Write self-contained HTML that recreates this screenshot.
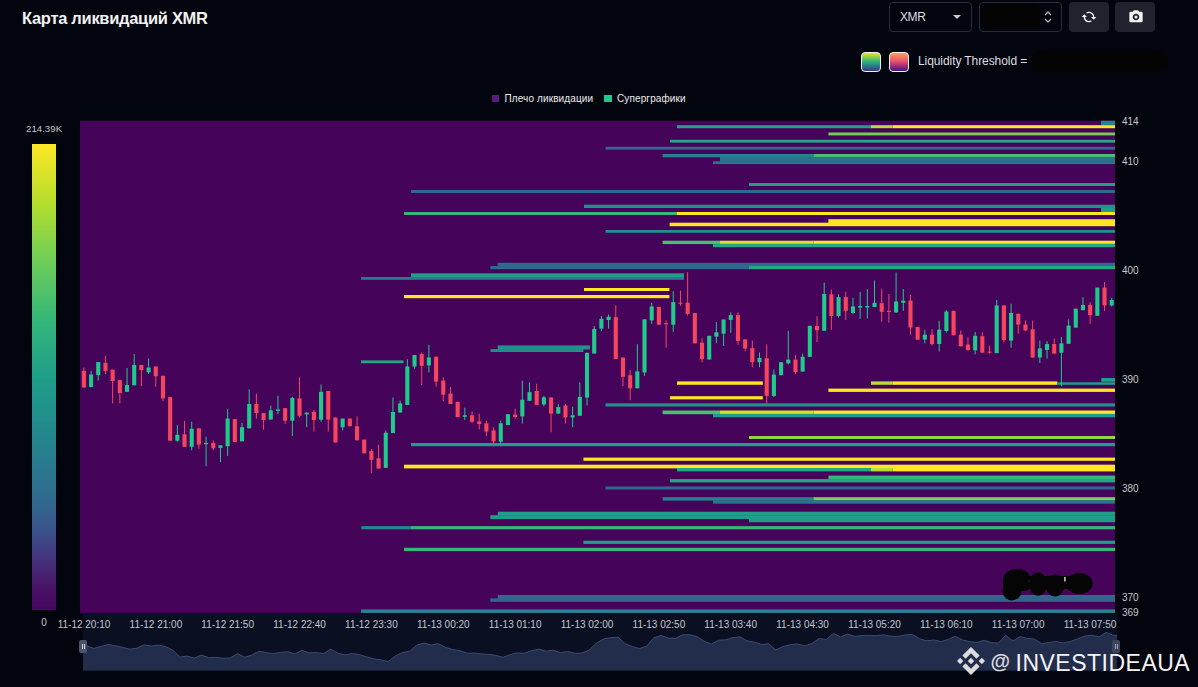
<!DOCTYPE html>
<html><head><meta charset="utf-8"><title>XMR</title>
<style>
html,body{margin:0;padding:0;}
body{width:1198px;height:687px;background:#03050e;overflow:hidden;position:relative;font-family:"Liberation Sans",sans-serif;color:#d6d6d6;}
.abs{position:absolute;}
.chart{position:absolute;left:0;top:0;}
.title{position:absolute;left:22px;top:7px;font-size:16.5px;font-weight:bold;color:#f2f2f2;line-height:22px;white-space:nowrap;letter-spacing:-0.3px;}
.box{position:absolute;top:2px;height:28px;border:1px solid #262c3a;border-radius:4px;background:#03050e;box-sizing:content-box;}
.btn{position:absolute;top:2px;height:30px;width:40px;border-radius:4px;background:#20232d;}
.xl{position:absolute;top:617.7px;width:80px;text-align:center;font-size:10px;line-height:14px;color:#c4c6cc;white-space:nowrap;}
.yl{position:absolute;left:1122px;font-size:10px;line-height:14px;color:#c4c6cc;}
.lg{position:absolute;top:91.7px;font-size:10px;line-height:14px;color:#ececee;white-space:nowrap;letter-spacing:0.12px;}
.sw{position:absolute;top:52px;width:17.5px;height:17.5px;border:1.5px solid #f0f0f0;border-radius:4px;}
</style></head><body>
<div class="abs" style="left:83px;top:614px;width:1034px;height:56.6px;background:#0a1022"></div>
<svg class="chart" width="1198" height="687" viewBox="0 0 1198 687"><rect x="80" y="120.7" width="1035" height="492.3" fill="#45035a"/><rect x="1101.0" y="120.7" width="14.0" height="4.9" fill="#26828e"/><rect x="677.0" y="125.2" width="194.0" height="3.0" fill="#24a08a"/><rect x="871.0" y="125.2" width="21.5" height="3.0" fill="#b4dc3a"/><rect x="892.5" y="125.2" width="222.5" height="3.0" fill="#fde725"/><rect x="828.4" y="132.5" width="286.6" height="2.9" fill="#74cf55"/><rect x="670.0" y="139.8" width="445.0" height="2.8" fill="#22a884"/><rect x="605.5" y="146.8" width="509.5" height="2.8" fill="#31688e"/><rect x="662.6" y="154.0" width="150.8" height="3.3" fill="#26828e"/><rect x="813.4" y="154.0" width="301.6" height="3.3" fill="#4ac16d"/><rect x="720.0" y="156.9" width="395.0" height="4.8" fill="#2c728e"/><rect x="713.0" y="161.3" width="402.0" height="2.8" fill="#2c728e"/><rect x="749.0" y="183.0" width="366.0" height="3.0" fill="#1f9e89"/><rect x="411.0" y="190.0" width="704.0" height="3.0" fill="#31688e"/><rect x="584.0" y="204.7" width="531.0" height="3.3" fill="#21918c"/><rect x="1101.0" y="207.6" width="14.0" height="4.8" fill="#1f9e89"/><rect x="404.0" y="212.0" width="272.6" height="3.0" fill="#35b779"/><rect x="676.6" y="212.0" width="438.4" height="3.0" fill="#fde725"/><rect x="828.4" y="219.2" width="286.6" height="3.9" fill="#fde725"/><rect x="669.6" y="222.7" width="445.4" height="3.5" fill="#fde725"/><rect x="605.5" y="230.0" width="509.5" height="2.8" fill="#21918c"/><rect x="662.6" y="240.7" width="57.4" height="3.4" fill="#4ac16d"/><rect x="720.0" y="240.7" width="93.4" height="3.4" fill="#d6e22a"/><rect x="813.4" y="240.7" width="301.6" height="3.4" fill="#fde725"/><rect x="713.0" y="243.7" width="402.0" height="3.5" fill="#22a884"/><rect x="497.7" y="262.8" width="617.3" height="3.6" fill="#31688e"/><rect x="490.3" y="266.0" width="258.7" height="3.2" fill="#31688e"/><rect x="749.0" y="266.0" width="366.0" height="3.2" fill="#22a884"/><rect x="411.0" y="273.3" width="273.0" height="4.1" fill="#1f9e89"/><rect x="361.0" y="277.0" width="323.0" height="2.8" fill="#2b7b8e"/><rect x="584.0" y="288.0" width="85.4" height="3.0" fill="#fde725"/><rect x="404.0" y="295.0" width="265.4" height="3.2" fill="#fde725"/><rect x="497.7" y="345.4" width="92.3" height="4.1" fill="#21918c"/><rect x="490.5" y="349.1" width="92.9" height="2.9" fill="#21918c"/><rect x="361.0" y="360.4" width="42.5" height="2.8" fill="#22a884"/><rect x="1101.3" y="378.0" width="13.7" height="3.8" fill="#1f9e89"/><rect x="677.0" y="381.4" width="85.8" height="3.4" fill="#fde725"/><rect x="871.0" y="381.4" width="21.4" height="3.4" fill="#b4dc3a"/><rect x="892.4" y="381.4" width="164.9" height="3.4" fill="#fde725"/><rect x="1057.3" y="382.3" width="57.7" height="2.5" fill="#1f9e89"/><rect x="828.4" y="388.6" width="286.6" height="3.3" fill="#fde725"/><rect x="670.0" y="396.2" width="92.8" height="3.2" fill="#fde725"/><rect x="605.5" y="403.3" width="509.5" height="3.2" fill="#21918c"/><rect x="662.6" y="410.5" width="57.4" height="3.7" fill="#4ac16d"/><rect x="720.0" y="410.5" width="93.4" height="3.7" fill="#d6e22a"/><rect x="813.4" y="410.5" width="301.6" height="3.7" fill="#fde725"/><rect x="713.0" y="413.8" width="402.0" height="3.5" fill="#1f9e89"/><rect x="749.0" y="436.0" width="366.0" height="3.0" fill="#8fd744"/><rect x="411.0" y="443.0" width="704.0" height="3.2" fill="#1f9e89"/><rect x="583.4" y="457.6" width="531.6" height="3.2" fill="#fde725"/><rect x="404.0" y="464.7" width="711.0" height="3.7" fill="#fde725"/><rect x="677.0" y="468.0" width="194.0" height="3.4" fill="#22a884"/><rect x="871.0" y="468.0" width="21.5" height="3.4" fill="#b4dc3a"/><rect x="892.5" y="468.0" width="222.5" height="3.4" fill="#fde725"/><rect x="828.4" y="475.6" width="286.6" height="3.9" fill="#35b779"/><rect x="670.0" y="479.1" width="445.0" height="3.3" fill="#22a884"/><rect x="605.5" y="486.5" width="509.5" height="3.0" fill="#31688e"/><rect x="662.6" y="497.2" width="150.8" height="3.4" fill="#26828e"/><rect x="813.4" y="497.2" width="301.6" height="3.4" fill="#7ad151"/><rect x="713.0" y="500.2" width="402.0" height="3.5" fill="#2c728e"/><rect x="497.8" y="511.7" width="617.2" height="3.9" fill="#1f9e89"/><rect x="490.3" y="515.2" width="624.7" height="3.9" fill="#1f9e89"/><rect x="749.0" y="518.7" width="366.0" height="3.5" fill="#1f9e89"/><rect x="361.3" y="526.1" width="49.7" height="3.2" fill="#24878e"/><rect x="411.0" y="526.1" width="704.0" height="3.2" fill="#35b779"/><rect x="583.4" y="540.7" width="531.6" height="3.2" fill="#1f9e89"/><rect x="404.0" y="547.8" width="711.0" height="3.3" fill="#35b779"/><rect x="497.8" y="595.0" width="617.2" height="3.8" fill="#31688e"/><rect x="490.3" y="598.4" width="624.7" height="3.4" fill="#31688e"/><rect x="361.0" y="609.4" width="754.0" height="3.6" fill="#26828e"/></svg>
<svg class="chart" width="1198" height="687" viewBox="0 0 1198 687"><rect x="83.39" y="367.6" width="1" height="20.0" fill="#f6465d"/><rect x="81.84" y="370.8" width="4.1" height="16.7" fill="#f6465d"/><rect x="90.58" y="370.8" width="1" height="16.3" fill="#1fcb8b"/><rect x="89.03" y="374.5" width="4.1" height="12.6" fill="#1fcb8b"/><rect x="97.77" y="362.1" width="1" height="18.4" fill="#1fcb8b"/><rect x="96.22" y="362.1" width="4.1" height="13.0" fill="#1fcb8b"/><rect x="104.96" y="355.6" width="1" height="18.4" fill="#f6465d"/><rect x="103.41" y="362.8" width="4.1" height="8.0" fill="#f6465d"/><rect x="112.14" y="369.7" width="1" height="33.6" fill="#f6465d"/><rect x="110.59" y="369.7" width="4.1" height="11.3" fill="#f6465d"/><rect x="119.33" y="380.1" width="1" height="23.2" fill="#f6465d"/><rect x="117.78" y="380.1" width="4.1" height="13.0" fill="#f6465d"/><rect x="126.52" y="368.0" width="1" height="23.9" fill="#1fcb8b"/><rect x="124.97" y="384.9" width="4.1" height="6.9" fill="#1fcb8b"/><rect x="133.71" y="354.1" width="1" height="31.3" fill="#1fcb8b"/><rect x="132.16" y="364.9" width="4.1" height="20.4" fill="#1fcb8b"/><rect x="140.89" y="364.9" width="1" height="21.1" fill="#f6465d"/><rect x="139.34" y="364.9" width="4.1" height="5.2" fill="#f6465d"/><rect x="148.08" y="358.4" width="1" height="15.6" fill="#1fcb8b"/><rect x="146.53" y="367.6" width="4.1" height="4.8" fill="#1fcb8b"/><rect x="155.27" y="366.5" width="1" height="20.2" fill="#f6465d"/><rect x="153.72" y="366.5" width="4.1" height="9.8" fill="#f6465d"/><rect x="162.46" y="375.8" width="1" height="25.4" fill="#f6465d"/><rect x="160.91" y="375.8" width="4.1" height="22.6" fill="#f6465d"/><rect x="169.64" y="397.1" width="1" height="43.6" fill="#f6465d"/><rect x="168.09" y="397.1" width="4.1" height="43.6" fill="#f6465d"/><rect x="176.83" y="425.1" width="1" height="16.7" fill="#1fcb8b"/><rect x="175.28" y="434.8" width="4.1" height="5.9" fill="#1fcb8b"/><rect x="184.02" y="420.7" width="1" height="26.0" fill="#f6465d"/><rect x="182.47" y="434.4" width="4.1" height="12.4" fill="#f6465d"/><rect x="191.21" y="421.8" width="1" height="28.6" fill="#1fcb8b"/><rect x="189.66" y="428.8" width="4.1" height="18.0" fill="#1fcb8b"/><rect x="198.39" y="428.3" width="1" height="20.6" fill="#f6465d"/><rect x="196.84" y="428.3" width="4.1" height="16.3" fill="#f6465d"/><rect x="205.58" y="436.6" width="1" height="29.7" fill="#1fcb8b"/><rect x="204.03" y="442.9" width="4.1" height="1.3" fill="#1fcb8b"/><rect x="212.77" y="440.3" width="1" height="9.8" fill="#f6465d"/><rect x="211.22" y="442.9" width="4.1" height="5.4" fill="#f6465d"/><rect x="219.96" y="445.3" width="1" height="16.7" fill="#1fcb8b"/><rect x="218.41" y="445.3" width="4.1" height="2.6" fill="#1fcb8b"/><rect x="227.14" y="409.2" width="1" height="46.7" fill="#1fcb8b"/><rect x="225.59" y="418.6" width="4.1" height="27.6" fill="#1fcb8b"/><rect x="234.33" y="419.2" width="1" height="22.8" fill="#f6465d"/><rect x="232.78" y="419.2" width="4.1" height="22.8" fill="#f6465d"/><rect x="241.52" y="422.9" width="1" height="18.4" fill="#1fcb8b"/><rect x="239.97" y="427.2" width="4.1" height="14.1" fill="#1fcb8b"/><rect x="248.71" y="389.3" width="1" height="39.1" fill="#1fcb8b"/><rect x="247.16" y="404.0" width="4.1" height="24.3" fill="#1fcb8b"/><rect x="255.89" y="393.6" width="1" height="25.0" fill="#f6465d"/><rect x="254.34" y="404.0" width="4.1" height="9.1" fill="#f6465d"/><rect x="263.08" y="413.1" width="1" height="16.7" fill="#f6465d"/><rect x="261.53" y="413.1" width="4.1" height="6.9" fill="#f6465d"/><rect x="270.27" y="405.5" width="1" height="14.1" fill="#1fcb8b"/><rect x="268.72" y="410.3" width="4.1" height="9.3" fill="#1fcb8b"/><rect x="277.46" y="395.8" width="1" height="18.4" fill="#1fcb8b"/><rect x="275.91" y="409.4" width="4.1" height="1.5" fill="#1fcb8b"/><rect x="284.64" y="408.1" width="1" height="15.8" fill="#f6465d"/><rect x="283.09" y="408.1" width="4.1" height="12.6" fill="#f6465d"/><rect x="291.83" y="396.9" width="1" height="39.1" fill="#1fcb8b"/><rect x="290.28" y="397.9" width="4.1" height="22.8" fill="#1fcb8b"/><rect x="299.02" y="377.3" width="1" height="40.2" fill="#f6465d"/><rect x="297.47" y="398.4" width="4.1" height="17.4" fill="#f6465d"/><rect x="306.21" y="412.0" width="1" height="15.2" fill="#1fcb8b"/><rect x="304.66" y="412.7" width="4.1" height="1.7" fill="#1fcb8b"/><rect x="313.39" y="409.9" width="1" height="21.7" fill="#f6465d"/><rect x="311.84" y="412.0" width="4.1" height="8.0" fill="#f6465d"/><rect x="320.58" y="384.5" width="1" height="37.3" fill="#1fcb8b"/><rect x="319.03" y="391.9" width="4.1" height="27.8" fill="#1fcb8b"/><rect x="327.77" y="391.0" width="1" height="40.6" fill="#f6465d"/><rect x="326.22" y="391.0" width="4.1" height="28.6" fill="#f6465d"/><rect x="334.96" y="417.5" width="1" height="25.0" fill="#f6465d"/><rect x="333.41" y="417.5" width="4.1" height="25.0" fill="#f6465d"/><rect x="342.14" y="418.6" width="1" height="11.9" fill="#1fcb8b"/><rect x="340.59" y="418.6" width="4.1" height="8.7" fill="#1fcb8b"/><rect x="349.33" y="418.6" width="1" height="7.6" fill="#f6465d"/><rect x="347.78" y="418.6" width="4.1" height="7.6" fill="#f6465d"/><rect x="356.52" y="416.4" width="1" height="23.9" fill="#f6465d"/><rect x="354.97" y="426.2" width="4.1" height="14.1" fill="#f6465d"/><rect x="363.71" y="439.6" width="1" height="13.7" fill="#f6465d"/><rect x="362.16" y="439.6" width="4.1" height="13.7" fill="#f6465d"/><rect x="370.89" y="448.9" width="1" height="23.9" fill="#f6465d"/><rect x="369.34" y="451.1" width="4.1" height="8.7" fill="#f6465d"/><rect x="378.08" y="444.6" width="1" height="23.9" fill="#f6465d"/><rect x="376.53" y="458.3" width="4.1" height="10.2" fill="#f6465d"/><rect x="385.27" y="430.5" width="1" height="37.3" fill="#1fcb8b"/><rect x="383.72" y="432.7" width="4.1" height="35.2" fill="#1fcb8b"/><rect x="392.46" y="397.5" width="1" height="35.6" fill="#1fcb8b"/><rect x="390.91" y="412.0" width="4.1" height="21.1" fill="#1fcb8b"/><rect x="399.64" y="400.5" width="1" height="11.9" fill="#1fcb8b"/><rect x="398.09" y="403.4" width="4.1" height="9.1" fill="#1fcb8b"/><rect x="406.83" y="359.3" width="1" height="45.6" fill="#1fcb8b"/><rect x="405.28" y="366.5" width="4.1" height="38.4" fill="#1fcb8b"/><rect x="414.02" y="355.0" width="1" height="13.7" fill="#1fcb8b"/><rect x="412.47" y="355.0" width="4.1" height="11.5" fill="#1fcb8b"/><rect x="421.21" y="352.4" width="1" height="32.6" fill="#f6465d"/><rect x="419.66" y="354.1" width="4.1" height="11.7" fill="#f6465d"/><rect x="428.39" y="344.8" width="1" height="27.6" fill="#1fcb8b"/><rect x="426.84" y="357.4" width="4.1" height="8.0" fill="#1fcb8b"/><rect x="435.58" y="356.7" width="1" height="29.9" fill="#f6465d"/><rect x="434.03" y="356.7" width="4.1" height="25.0" fill="#f6465d"/><rect x="442.77" y="377.3" width="1" height="23.9" fill="#f6465d"/><rect x="441.22" y="380.6" width="4.1" height="14.1" fill="#f6465d"/><rect x="449.96" y="387.1" width="1" height="16.9" fill="#f6465d"/><rect x="448.41" y="393.6" width="4.1" height="10.4" fill="#f6465d"/><rect x="457.14" y="401.8" width="1" height="15.2" fill="#f6465d"/><rect x="455.59" y="401.8" width="4.1" height="15.2" fill="#f6465d"/><rect x="464.33" y="407.7" width="1" height="12.4" fill="#1fcb8b"/><rect x="462.78" y="415.3" width="4.1" height="1.5" fill="#1fcb8b"/><rect x="471.52" y="411.4" width="1" height="11.5" fill="#f6465d"/><rect x="469.97" y="415.3" width="4.1" height="6.5" fill="#f6465d"/><rect x="478.71" y="413.6" width="1" height="15.8" fill="#f6465d"/><rect x="477.16" y="421.4" width="4.1" height="2.6" fill="#f6465d"/><rect x="485.89" y="420.7" width="1" height="15.2" fill="#f6465d"/><rect x="484.34" y="423.5" width="4.1" height="8.0" fill="#f6465d"/><rect x="493.08" y="427.2" width="1" height="17.4" fill="#f6465d"/><rect x="491.53" y="430.5" width="4.1" height="10.9" fill="#f6465d"/><rect x="500.27" y="420.7" width="1" height="22.8" fill="#1fcb8b"/><rect x="498.72" y="423.3" width="4.1" height="18.4" fill="#1fcb8b"/><rect x="507.46" y="414.2" width="1" height="10.9" fill="#1fcb8b"/><rect x="505.91" y="414.2" width="4.1" height="10.9" fill="#1fcb8b"/><rect x="514.64" y="408.8" width="1" height="9.8" fill="#f6465d"/><rect x="513.09" y="414.6" width="4.1" height="2.4" fill="#f6465d"/><rect x="521.83" y="380.6" width="1" height="43.0" fill="#1fcb8b"/><rect x="520.28" y="399.7" width="4.1" height="16.7" fill="#1fcb8b"/><rect x="529.02" y="382.3" width="1" height="18.4" fill="#1fcb8b"/><rect x="527.47" y="392.1" width="4.1" height="8.7" fill="#1fcb8b"/><rect x="536.21" y="383.8" width="1" height="21.1" fill="#f6465d"/><rect x="534.66" y="391.0" width="4.1" height="13.9" fill="#f6465d"/><rect x="543.39" y="395.8" width="1" height="10.4" fill="#1fcb8b"/><rect x="541.84" y="397.3" width="4.1" height="7.2" fill="#1fcb8b"/><rect x="550.58" y="397.5" width="1" height="34.7" fill="#f6465d"/><rect x="549.03" y="397.5" width="4.1" height="16.1" fill="#f6465d"/><rect x="557.77" y="404.0" width="1" height="10.2" fill="#1fcb8b"/><rect x="556.22" y="407.1" width="4.1" height="6.5" fill="#1fcb8b"/><rect x="564.96" y="404.0" width="1" height="19.5" fill="#f6465d"/><rect x="563.41" y="405.5" width="4.1" height="11.9" fill="#f6465d"/><rect x="572.14" y="406.6" width="1" height="20.6" fill="#1fcb8b"/><rect x="570.59" y="415.3" width="4.1" height="2.2" fill="#1fcb8b"/><rect x="579.33" y="382.3" width="1" height="33.4" fill="#1fcb8b"/><rect x="577.78" y="396.9" width="4.1" height="18.9" fill="#1fcb8b"/><rect x="586.52" y="352.8" width="1" height="52.7" fill="#1fcb8b"/><rect x="584.97" y="352.8" width="4.1" height="44.7" fill="#1fcb8b"/><rect x="593.71" y="326.0" width="1" height="27.6" fill="#1fcb8b"/><rect x="592.16" y="329.0" width="4.1" height="24.5" fill="#1fcb8b"/><rect x="600.89" y="316.0" width="1" height="15.2" fill="#1fcb8b"/><rect x="599.34" y="318.8" width="4.1" height="9.8" fill="#1fcb8b"/><rect x="608.08" y="314.5" width="1" height="14.1" fill="#1fcb8b"/><rect x="606.53" y="316.7" width="4.1" height="3.3" fill="#1fcb8b"/><rect x="615.27" y="305.2" width="1" height="53.8" fill="#f6465d"/><rect x="613.72" y="317.1" width="4.1" height="41.9" fill="#f6465d"/><rect x="622.46" y="357.5" width="1" height="28.6" fill="#f6465d"/><rect x="620.91" y="357.5" width="4.1" height="19.3" fill="#f6465d"/><rect x="629.64" y="370.3" width="1" height="29.9" fill="#f6465d"/><rect x="628.09" y="375.3" width="4.1" height="13.0" fill="#f6465d"/><rect x="636.83" y="344.2" width="1" height="44.1" fill="#1fcb8b"/><rect x="635.28" y="371.4" width="4.1" height="16.9" fill="#1fcb8b"/><rect x="644.02" y="319.3" width="1" height="56.6" fill="#1fcb8b"/><rect x="642.47" y="319.3" width="4.1" height="53.2" fill="#1fcb8b"/><rect x="651.21" y="303.0" width="1" height="20.8" fill="#1fcb8b"/><rect x="649.66" y="306.5" width="4.1" height="13.9" fill="#1fcb8b"/><rect x="658.39" y="306.9" width="1" height="17.8" fill="#f6465d"/><rect x="656.84" y="306.9" width="4.1" height="17.8" fill="#f6465d"/><rect x="665.58" y="320.4" width="1" height="27.3" fill="#f6465d"/><rect x="664.03" y="323.2" width="4.1" height="1.1" fill="#f6465d"/><rect x="672.77" y="291.1" width="1" height="40.8" fill="#1fcb8b"/><rect x="671.22" y="302.1" width="4.1" height="22.6" fill="#1fcb8b"/><rect x="679.96" y="290.6" width="1" height="15.2" fill="#f6465d"/><rect x="678.41" y="302.6" width="4.1" height="1.1" fill="#f6465d"/><rect x="687.14" y="272.2" width="1" height="43.4" fill="#f6465d"/><rect x="685.59" y="302.6" width="4.1" height="11.3" fill="#f6465d"/><rect x="694.33" y="313.0" width="1" height="30.4" fill="#f6465d"/><rect x="692.78" y="313.0" width="4.1" height="30.4" fill="#f6465d"/><rect x="701.52" y="338.4" width="1" height="23.9" fill="#f6465d"/><rect x="699.97" y="342.7" width="4.1" height="16.3" fill="#f6465d"/><rect x="708.71" y="335.8" width="1" height="23.7" fill="#1fcb8b"/><rect x="707.16" y="335.8" width="4.1" height="23.7" fill="#1fcb8b"/><rect x="715.89" y="322.1" width="1" height="21.1" fill="#1fcb8b"/><rect x="714.34" y="332.3" width="4.1" height="4.3" fill="#1fcb8b"/><rect x="723.08" y="319.5" width="1" height="26.5" fill="#1fcb8b"/><rect x="721.53" y="319.5" width="4.1" height="14.1" fill="#1fcb8b"/><rect x="730.27" y="312.3" width="1" height="20.6" fill="#1fcb8b"/><rect x="728.72" y="315.1" width="4.1" height="4.8" fill="#1fcb8b"/><rect x="737.46" y="312.3" width="1" height="32.6" fill="#f6465d"/><rect x="735.91" y="315.1" width="4.1" height="25.8" fill="#f6465d"/><rect x="744.64" y="339.4" width="1" height="11.9" fill="#f6465d"/><rect x="743.09" y="339.4" width="4.1" height="9.1" fill="#f6465d"/><rect x="751.83" y="340.5" width="1" height="26.7" fill="#f6465d"/><rect x="750.28" y="348.1" width="4.1" height="14.1" fill="#f6465d"/><rect x="759.02" y="352.5" width="1" height="14.8" fill="#1fcb8b"/><rect x="757.47" y="357.9" width="4.1" height="4.3" fill="#1fcb8b"/><rect x="766.21" y="344.2" width="1" height="59.2" fill="#f6465d"/><rect x="764.66" y="358.3" width="4.1" height="37.5" fill="#f6465d"/><rect x="773.39" y="369.4" width="1" height="27.6" fill="#1fcb8b"/><rect x="771.84" y="374.6" width="4.1" height="21.3" fill="#1fcb8b"/><rect x="780.58" y="362.2" width="1" height="13.0" fill="#1fcb8b"/><rect x="779.03" y="362.2" width="4.1" height="13.0" fill="#1fcb8b"/><rect x="787.77" y="330.8" width="1" height="33.6" fill="#1fcb8b"/><rect x="786.22" y="359.6" width="4.1" height="3.7" fill="#1fcb8b"/><rect x="794.96" y="355.1" width="1" height="19.1" fill="#f6465d"/><rect x="793.41" y="359.6" width="4.1" height="12.4" fill="#f6465d"/><rect x="802.14" y="353.6" width="1" height="18.0" fill="#1fcb8b"/><rect x="800.59" y="356.8" width="4.1" height="14.8" fill="#1fcb8b"/><rect x="809.33" y="325.8" width="1" height="31.0" fill="#1fcb8b"/><rect x="807.78" y="325.8" width="4.1" height="31.0" fill="#1fcb8b"/><rect x="816.52" y="316.2" width="1" height="25.8" fill="#f6465d"/><rect x="814.97" y="326.0" width="4.1" height="4.3" fill="#f6465d"/><rect x="823.71" y="282.6" width="1" height="48.2" fill="#1fcb8b"/><rect x="822.16" y="293.9" width="4.1" height="36.9" fill="#1fcb8b"/><rect x="830.89" y="289.5" width="1" height="40.2" fill="#f6465d"/><rect x="829.34" y="294.3" width="4.1" height="21.7" fill="#f6465d"/><rect x="838.08" y="294.3" width="1" height="23.4" fill="#1fcb8b"/><rect x="836.53" y="297.1" width="4.1" height="18.9" fill="#1fcb8b"/><rect x="845.27" y="291.7" width="1" height="28.2" fill="#f6465d"/><rect x="843.72" y="297.1" width="4.1" height="13.7" fill="#f6465d"/><rect x="852.46" y="297.8" width="1" height="16.3" fill="#1fcb8b"/><rect x="850.91" y="306.5" width="4.1" height="6.5" fill="#1fcb8b"/><rect x="859.64" y="291.9" width="1" height="26.9" fill="#1fcb8b"/><rect x="858.09" y="306.1" width="4.1" height="1.5" fill="#1fcb8b"/><rect x="866.83" y="289.1" width="1" height="29.3" fill="#1fcb8b"/><rect x="865.28" y="306.1" width="4.1" height="1.5" fill="#1fcb8b"/><rect x="874.02" y="280.4" width="1" height="26.7" fill="#1fcb8b"/><rect x="872.47" y="302.8" width="4.1" height="4.3" fill="#1fcb8b"/><rect x="881.21" y="288.5" width="1" height="33.2" fill="#f6465d"/><rect x="879.66" y="303.2" width="4.1" height="8.7" fill="#f6465d"/><rect x="888.39" y="294.1" width="1" height="28.6" fill="#f6465d"/><rect x="886.84" y="310.8" width="4.1" height="1.1" fill="#f6465d"/><rect x="895.58" y="272.4" width="1" height="40.6" fill="#1fcb8b"/><rect x="894.03" y="301.5" width="4.1" height="10.9" fill="#1fcb8b"/><rect x="902.77" y="289.1" width="1" height="21.7" fill="#1fcb8b"/><rect x="901.22" y="300.6" width="4.1" height="2.2" fill="#1fcb8b"/><rect x="909.96" y="295.0" width="1" height="39.7" fill="#f6465d"/><rect x="908.41" y="300.6" width="4.1" height="26.9" fill="#f6465d"/><rect x="917.14" y="327.1" width="1" height="12.6" fill="#f6465d"/><rect x="915.59" y="327.1" width="4.1" height="12.6" fill="#f6465d"/><rect x="924.33" y="329.7" width="1" height="13.7" fill="#1fcb8b"/><rect x="922.78" y="334.7" width="4.1" height="4.8" fill="#1fcb8b"/><rect x="931.52" y="329.3" width="1" height="16.3" fill="#f6465d"/><rect x="929.97" y="334.7" width="4.1" height="9.3" fill="#f6465d"/><rect x="938.71" y="320.6" width="1" height="31.0" fill="#1fcb8b"/><rect x="937.16" y="329.7" width="4.1" height="14.3" fill="#1fcb8b"/><rect x="945.89" y="310.2" width="1" height="22.4" fill="#1fcb8b"/><rect x="944.34" y="311.5" width="4.1" height="19.5" fill="#1fcb8b"/><rect x="953.08" y="310.8" width="1" height="24.5" fill="#f6465d"/><rect x="951.53" y="310.8" width="4.1" height="24.5" fill="#f6465d"/><rect x="960.27" y="330.4" width="1" height="16.3" fill="#f6465d"/><rect x="958.72" y="334.7" width="4.1" height="11.5" fill="#f6465d"/><rect x="967.46" y="336.9" width="1" height="14.1" fill="#f6465d"/><rect x="965.91" y="344.5" width="4.1" height="5.4" fill="#f6465d"/><rect x="974.64" y="331.9" width="1" height="22.4" fill="#1fcb8b"/><rect x="973.09" y="335.8" width="4.1" height="14.5" fill="#1fcb8b"/><rect x="981.83" y="331.9" width="1" height="20.8" fill="#f6465d"/><rect x="980.28" y="336.2" width="4.1" height="16.5" fill="#f6465d"/><rect x="989.02" y="345.6" width="1" height="8.0" fill="#f6465d"/><rect x="987.47" y="351.6" width="4.1" height="1.1" fill="#f6465d"/><rect x="996.21" y="300.0" width="1" height="53.2" fill="#1fcb8b"/><rect x="994.66" y="305.4" width="4.1" height="47.7" fill="#1fcb8b"/><rect x="1003.39" y="305.4" width="1" height="36.9" fill="#f6465d"/><rect x="1001.84" y="305.4" width="4.1" height="34.7" fill="#f6465d"/><rect x="1010.58" y="303.7" width="1" height="44.1" fill="#1fcb8b"/><rect x="1009.03" y="313.0" width="4.1" height="27.6" fill="#1fcb8b"/><rect x="1017.77" y="313.7" width="1" height="20.0" fill="#f6465d"/><rect x="1016.22" y="313.7" width="4.1" height="10.9" fill="#f6465d"/><rect x="1024.96" y="320.2" width="1" height="10.9" fill="#f6465d"/><rect x="1023.41" y="324.5" width="4.1" height="5.9" fill="#f6465d"/><rect x="1032.14" y="320.6" width="1" height="36.9" fill="#f6465d"/><rect x="1030.59" y="329.3" width="4.1" height="28.2" fill="#f6465d"/><rect x="1039.33" y="340.6" width="1" height="22.4" fill="#1fcb8b"/><rect x="1037.78" y="348.4" width="4.1" height="9.1" fill="#1fcb8b"/><rect x="1046.52" y="341.2" width="1" height="17.4" fill="#1fcb8b"/><rect x="1044.97" y="344.0" width="4.1" height="5.9" fill="#1fcb8b"/><rect x="1053.71" y="338.4" width="1" height="15.8" fill="#f6465d"/><rect x="1052.16" y="344.0" width="4.1" height="9.5" fill="#f6465d"/><rect x="1060.89" y="336.9" width="1" height="49.3" fill="#1fcb8b"/><rect x="1059.34" y="343.4" width="4.1" height="9.3" fill="#1fcb8b"/><rect x="1068.08" y="319.5" width="1" height="24.3" fill="#1fcb8b"/><rect x="1066.53" y="325.6" width="4.1" height="18.2" fill="#1fcb8b"/><rect x="1075.27" y="308.7" width="1" height="18.9" fill="#1fcb8b"/><rect x="1073.72" y="308.7" width="4.1" height="18.9" fill="#1fcb8b"/><rect x="1082.46" y="297.2" width="1" height="13.0" fill="#1fcb8b"/><rect x="1080.91" y="305.0" width="4.1" height="5.2" fill="#1fcb8b"/><rect x="1089.64" y="302.2" width="1" height="21.7" fill="#f6465d"/><rect x="1088.09" y="305.0" width="4.1" height="10.2" fill="#f6465d"/><rect x="1096.83" y="287.6" width="1" height="28.2" fill="#1fcb8b"/><rect x="1095.28" y="287.6" width="4.1" height="28.2" fill="#1fcb8b"/><rect x="1104.02" y="282.0" width="1" height="28.9" fill="#f6465d"/><rect x="1102.47" y="287.6" width="4.1" height="17.8" fill="#f6465d"/><rect x="1111.21" y="297.8" width="1" height="8.7" fill="#1fcb8b"/><rect x="1109.66" y="300.0" width="4.1" height="5.4" fill="#1fcb8b"/><path d="M83.0,645.8 L86.6,645.8 L93.8,648.4 L101.0,646.5 L108.1,644.5 L115.3,645.7 L122.5,647.3 L129.7,649.2 L136.9,648.2 L144.0,644.9 L151.2,646.1 L158.4,645.1 L165.6,646.6 L172.8,650.1 L179.9,657.1 L187.1,656.1 L194.3,658.1 L201.5,655.1 L208.7,657.6 L215.8,657.4 L223.0,658.2 L230.2,658.0 L237.4,653.6 L244.6,657.2 L251.7,655.1 L258.9,651.2 L266.1,652.6 L273.3,653.7 L280.5,652.3 L287.6,651.8 L294.8,653.9 L302.0,650.3 L309.2,652.9 L316.4,652.5 L323.5,653.7 L330.7,649.1 L337.9,653.3 L345.1,654.9 L352.3,653.5 L359.5,654.7 L366.6,656.9 L373.8,658.8 L381.0,659.9 L388.2,661.5 L395.4,655.9 L402.5,652.5 L409.7,651.3 L416.9,645.1 L424.1,643.1 L431.3,645.0 L438.4,643.6 L445.6,647.4 L452.8,649.5 L460.0,650.8 L467.2,653.2 L474.3,653.0 L481.5,654.0 L488.7,654.3 L495.9,655.4 L503.1,657.3 L510.2,654.6 L517.4,652.9 L524.6,653.2 L531.8,650.7 L539.0,649.1 L546.1,651.2 L553.3,650.1 L560.5,652.7 L567.7,651.4 L574.9,653.3 L582.0,653.1 L589.2,650.1 L596.4,643.0 L603.6,639.0 L610.8,637.6 L618.0,637.2 L625.1,643.7 L632.3,646.5 L639.5,648.6 L646.7,646.1 L653.9,637.7 L661.0,635.5 L668.2,638.1 L675.4,638.4 L682.6,634.8 L689.8,634.8 L696.9,636.5 L704.1,641.3 L711.3,644.0 L718.5,640.3 L725.7,639.8 L732.8,637.6 L740.0,636.9 L747.2,640.8 L754.4,642.2 L761.6,644.4 L768.7,643.8 L775.9,649.9 L783.1,646.5 L790.3,644.6 L797.5,644.0 L804.6,645.9 L811.8,643.6 L819.0,638.6 L826.2,639.4 L833.4,633.5 L840.5,637.0 L847.7,634.0 L854.9,636.5 L862.1,635.6 L869.3,635.6 L876.5,635.6 L883.6,634.9 L890.8,636.2 L898.0,636.4 L905.2,634.9 L912.4,634.5 L919.5,638.8 L926.7,640.8 L933.9,640.0 L941.1,641.5 L948.3,639.4 L955.4,636.2 L962.6,640.0 L969.8,641.6 L977.0,642.5 L984.2,640.3 L991.3,642.7 L998.5,643.0 L1005.7,635.3 L1012.9,641.0 L1020.1,636.6 L1027.2,638.4 L1034.4,639.1 L1041.6,643.7 L1048.8,642.5 L1056.0,641.5 L1063.1,642.9 L1070.3,641.5 L1077.5,638.9 L1084.7,636.1 L1091.9,635.2 L1099.0,637.0 L1106.2,632.4 L1113.4,635.3 L1117.0,635.3 L1117,670.6 L83,670.6 Z" fill="#222d4b"/><path d="M83.0,645.8 L86.6,645.8 L93.8,648.4 L101.0,646.5 L108.1,644.5 L115.3,645.7 L122.5,647.3 L129.7,649.2 L136.9,648.2 L144.0,644.9 L151.2,646.1 L158.4,645.1 L165.6,646.6 L172.8,650.1 L179.9,657.1 L187.1,656.1 L194.3,658.1 L201.5,655.1 L208.7,657.6 L215.8,657.4 L223.0,658.2 L230.2,658.0 L237.4,653.6 L244.6,657.2 L251.7,655.1 L258.9,651.2 L266.1,652.6 L273.3,653.7 L280.5,652.3 L287.6,651.8 L294.8,653.9 L302.0,650.3 L309.2,652.9 L316.4,652.5 L323.5,653.7 L330.7,649.1 L337.9,653.3 L345.1,654.9 L352.3,653.5 L359.5,654.7 L366.6,656.9 L373.8,658.8 L381.0,659.9 L388.2,661.5 L395.4,655.9 L402.5,652.5 L409.7,651.3 L416.9,645.1 L424.1,643.1 L431.3,645.0 L438.4,643.6 L445.6,647.4 L452.8,649.5 L460.0,650.8 L467.2,653.2 L474.3,653.0 L481.5,654.0 L488.7,654.3 L495.9,655.4 L503.1,657.3 L510.2,654.6 L517.4,652.9 L524.6,653.2 L531.8,650.7 L539.0,649.1 L546.1,651.2 L553.3,650.1 L560.5,652.7 L567.7,651.4 L574.9,653.3 L582.0,653.1 L589.2,650.1 L596.4,643.0 L603.6,639.0 L610.8,637.6 L618.0,637.2 L625.1,643.7 L632.3,646.5 L639.5,648.6 L646.7,646.1 L653.9,637.7 L661.0,635.5 L668.2,638.1 L675.4,638.4 L682.6,634.8 L689.8,634.8 L696.9,636.5 L704.1,641.3 L711.3,644.0 L718.5,640.3 L725.7,639.8 L732.8,637.6 L740.0,636.9 L747.2,640.8 L754.4,642.2 L761.6,644.4 L768.7,643.8 L775.9,649.9 L783.1,646.5 L790.3,644.6 L797.5,644.0 L804.6,645.9 L811.8,643.6 L819.0,638.6 L826.2,639.4 L833.4,633.5 L840.5,637.0 L847.7,634.0 L854.9,636.5 L862.1,635.6 L869.3,635.6 L876.5,635.6 L883.6,634.9 L890.8,636.2 L898.0,636.4 L905.2,634.9 L912.4,634.5 L919.5,638.8 L926.7,640.8 L933.9,640.0 L941.1,641.5 L948.3,639.4 L955.4,636.2 L962.6,640.0 L969.8,641.6 L977.0,642.5 L984.2,640.3 L991.3,642.7 L998.5,643.0 L1005.7,635.3 L1012.9,641.0 L1020.1,636.6 L1027.2,638.4 L1034.4,639.1 L1041.6,643.7 L1048.8,642.5 L1056.0,641.5 L1063.1,642.9 L1070.3,641.5 L1077.5,638.9 L1084.7,636.1 L1091.9,635.2 L1099.0,637.0 L1106.2,632.4 L1113.4,635.3 L1117.0,635.3" fill="none" stroke="#3b4a72" stroke-width="1"/></svg>
<div class="title">Карта ликвидаций XMR</div>

<div class="box" style="left:889px;width:81px"><span class="abs" style="left:10px;top:7px;font-size:12px;line-height:14px;color:#dcdee2;letter-spacing:-0.4px">XMR</span><span class="abs" style="left:63px;top:12px;width:0;height:0;border-left:4px solid transparent;border-right:4px solid transparent;border-top:4px solid #c8cad0"></span></div>
<div class="box" style="left:979px;width:81px"><span class="abs" style="left:1px;top:0px;width:60px;height:27px;border-radius:11px;background:#040405"></span>
<svg class="abs" style="left:63px;top:6px" width="10" height="16" viewBox="0 0 10 16"><path d="M2 6 L5 3 L8 6 M2 10 L5 13 L8 10" fill="none" stroke="#aeb2ba" stroke-width="1.3"/></svg></div>
<div class="btn" style="left:1069px"></div><svg class="abs" style="left:1080.8px;top:8.7px" width="16" height="16" viewBox="0 0 24 24"><path fill="#f2f2f3" transform="translate(0,24) scale(1,-1)" d="M19 8l-4 4h3c0 3.31-2.69 6-6 6-1.01 0-1.97-.25-2.8-.7l-1.46 1.46C8.97 19.54 10.43 20 12 20c4.42 0 8-3.58 8-8h3l-4-4zM6 12c0-3.31 2.69-6 6-6 1.01 0 1.97.25 2.8.7l1.46-1.46C15.03 4.46 13.57 4 12 4c-4.42 0-8 3.58-8 8H1l4 4 4-4H6z"/></svg>
<div class="btn" style="left:1115.3px"></div><svg class="abs" style="left:1127.5px;top:9.1px" width="16" height="16" viewBox="0 0 24 24"><circle cx="12" cy="12" r="2.3" fill="#f2f2f3"/><path fill="#f2f2f3" d="M9 2L7.17 4H4c-1.1 0-2 .9-2 2v12c0 1.1.9 2 2 2h16c1.1 0 2-.9 2-2V6c0-1.1-.9-2-2-2h-3.17L15 2H9zm3 15c-2.76 0-5-2.24-5-5s2.24-5 5-5 5 2.24 5 5-2.24 5-5 5z"/></svg>

<div class="sw" style="left:861px;background:linear-gradient(#e8e419,#35b779 45%,#26828e 70%,#46307c)"></div>
<div class="sw" style="left:889px;background:linear-gradient(#f7a15a,#ee5a6a 40%,#b5367a 65%,#3b1a78)"></div>
<div class="abs" style="left:918px;top:53px;font-size:12px;line-height:16px;color:#dcdde0;white-space:nowrap;letter-spacing:-0.08px">Liquidity Threshold =</div>
<div class="abs" style="left:1031px;top:50px;width:137px;height:23px;border-radius:11px;background:#040405"></div>

<div class="abs" style="left:492px;top:94.5px;width:7px;height:7.5px;background:#5b1b7a"></div>
<div class="lg" style="left:504.5px">Плечо ликвидации</div>
<div class="abs" style="left:604px;top:94.5px;width:8px;height:7.5px;background:#1fc98a"></div>
<div class="lg" style="left:617px">Суперграфики</div>

<div class="abs" style="left:26px;top:122px;width:36px;text-align:center;font-size:9.7px;line-height:14px;color:#c4c6cc">214.39K</div>
<div class="abs" style="left:32px;top:143.5px;width:24px;height:466.3px;background:linear-gradient(#fde725 0%,#b5de2b 12.5%,#6ece58 25%,#35b779 37.5%,#1f9e89 50%,#228c8d 60%,#2a788e 70%,#31688e 77%,#3b528b 83%,#46337f 89%,#481467 95%,#470660 100%)"></div>
<div class="abs" style="left:38px;top:616.3px;width:12px;text-align:center;font-size:10px;line-height:14px;color:#c4c6cc">0</div>
<div class="xl" style="left:44.0px">11-12 20:10</div><div class="xl" style="left:115.9px">11-12 21:00</div><div class="xl" style="left:187.7px">11-12 21:50</div><div class="xl" style="left:259.6px">11-12 22:40</div><div class="xl" style="left:331.4px">11-12 23:30</div><div class="xl" style="left:403.3px">11-13 00:20</div><div class="xl" style="left:475.2px">11-13 01:10</div><div class="xl" style="left:547.0px">11-13 02:00</div><div class="xl" style="left:618.9px">11-13 02:50</div><div class="xl" style="left:690.7px">11-13 03:40</div><div class="xl" style="left:762.6px">11-13 04:30</div><div class="xl" style="left:834.5px">11-13 05:20</div><div class="xl" style="left:906.3px">11-13 06:10</div><div class="xl" style="left:978.2px">11-13 07:00</div><div class="xl" style="left:1050.0px">11-13 07:50</div>
<div class="yl" style="top:114.5px">414</div><div class="yl" style="top:155.3px">410</div><div class="yl" style="top:264.3px">400</div><div class="yl" style="top:373.0px">390</div><div class="yl" style="top:481.7px">380</div><div class="yl" style="top:590.5px">370</div><div class="yl" style="top:606.0px">369</div>

<svg class="chart" width="1198" height="687" viewBox="0 0 1198 687"><g fill="#050505"><circle cx="1012" cy="591" r="9.5"/><ellipse cx="1017" cy="577.2" rx="13" ry="8.2"/><ellipse cx="1038.1" cy="584" rx="9.2" ry="11.5"/><ellipse cx="1055.1" cy="585.5" rx="9.2" ry="11"/><ellipse cx="1079.2" cy="583.5" rx="13.5" ry="10.5"/><rect x="1030" y="576" width="46" height="13"/><rect x="1003" y="574" width="18" height="18" rx="5"/><ellipse cx="1024" cy="586" rx="7" ry="5"/></g><rect x="1064.2" y="577" width="1.4" height="4.5" fill="#ddd"/></svg>

<div class="abs" style="left:79px;top:640px;width:8px;height:12.5px;border-radius:2px;background:#4a5368"><span class="abs" style="left:2.5px;top:3.5px;width:1px;height:5.5px;background:#cfd3da"></span><span class="abs" style="left:4.5px;top:3.5px;width:1px;height:5.5px;background:#cfd3da"></span></div>
<div class="abs" style="left:1112px;top:640px;width:8px;height:12.5px;border-radius:2px;background:#3c4559"><span class="abs" style="left:2.5px;top:3.5px;width:1px;height:5.5px;background:#9aa0ac"></span><span class="abs" style="left:4.5px;top:3.5px;width:1px;height:5.5px;background:#9aa0ac"></span></div>

<svg class="abs" style="left:956.8px;top:647px" width="28" height="28" viewBox="0 0 126.61 126.61"><g fill="#dcdcde"><polygon points="38.73 53.2 63.3 28.63 87.88 53.21 102.18 38.91 63.3 0 24.43 38.9 38.73 53.2"/><polygon points="0 63.3 14.3 49 28.6 63.3 14.3 77.6"/><polygon points="38.73 73.41 63.3 97.98 87.88 73.4 102.19 87.69 63.3 126.61 24.43 87.71 38.73 73.41"/><polygon points="98 63.3 112.3 49 126.6 63.3 112.3 77.6"/><polygon points="77.83 63.3 63.3 48.77 48.78 63.29 63.3 77.83"/></g></svg>
<div class="abs" style="left:990.5px;top:647px;font-size:20px;font-weight:bold;line-height:28px;color:#dadadc;white-space:nowrap">@</div>
<div class="abs" style="left:1015.5px;top:648.5px;font-size:23px;line-height:28px;color:#f4f4f5;white-space:nowrap;letter-spacing:0.5px">INVESTIDEAUA</div>
</body></html>
